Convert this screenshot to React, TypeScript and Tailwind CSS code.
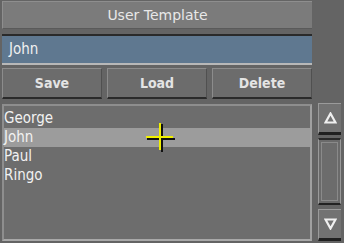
import React from "react";

export default function App() {
  const items = ["George", "John", "Paul", "Ringo"];
  const cond = { fontFamily: '"DejaVu Sans Condensed", "DejaVu Sans", sans-serif' };
  return (
    <div
      className="w-[344px] h-[243px] bg-[#646464] relative overflow-hidden flex flex-col pt-[1px] pl-[2px]"
      style={{ fontFamily: '"DejaVu Sans", sans-serif' }}
    >
      <div className="flex">
        <div className="w-[310px] flex flex-col">
          <div className="h-[28px] bg-[#7b7b7b] border-t border-l border-[#8e8e8e] border-b border-b-[#5a5a5a] flex items-center justify-center text-[14px] text-[#e8e8e8]">
            User Template
          </div>
          <div
            className="mt-[5px] h-[31px] bg-[#5f7890] border-t-2 border-t-[#2a2a2a] border-b-2 border-b-[#b8b8b8] flex items-center pl-[7px] text-[15px] text-[#f0f0f0]"
            style={cond}
          >
            John
          </div>
          <div className="mt-[3px] flex gap-[5px]" style={cond}>
            {["Save", "Load", "Delete"].map((b) => (
              <div
                key={b}
                className="flex-1 h-[31px] bg-[#6c6c6c] border-t border-l border-[#8c8c8c] border-r border-r-[#505050] border-b-2 border-b-[#2a2a2a] flex items-center justify-center text-[14px] font-bold text-[#e4e4e4]"
              >
                {b}
              </div>
            ))}
          </div>
          <div
            className="mt-[5px] h-[137px] bg-[#6d6d6d] border-2 border-[#8e8e8e] border-r-[#a0a0a0] border-b-[#a8a8a8] pt-[3px] flex flex-col"
            style={cond}
          >
            {items.map((it) => (
              <div
                key={it}
                className={`h-[19px] flex items-center pl-[0px] text-[15px] text-[#f2f2f2] ${
                  it === "John" ? "bg-[#9c9c9c]" : ""
                }`}
              >
                {it}
              </div>
            ))}
          </div>
        </div>
        <div className="ml-[6px] w-[23px] flex flex-col pt-[102px]">
          <div className="h-[32px] bg-[#727272] border-t border-l border-[#9a9a9a] border-b-[3px] border-b-[#202020] flex items-center justify-center">
            <svg width="13" height="12" viewBox="0 0 13 12">
              <path d="M6.5 1.5 L11.5 10.5 L1.5 10.5 Z" fill="none" stroke="#f0f0f0" strokeWidth="2.2" strokeLinejoin="miter" />
            </svg>
          </div>
          <div className="mt-[3px] h-[67px] bg-[#6a6a6a] border-t-2 border-t-[#2a2a2a] border-l border-l-[#9a9a9a] border-r border-r-[#9a9a9a] border-b-2 border-b-[#222] p-[2px]">
            <div className="w-full h-full border border-[#8a8a8a] bg-[#6c6c6c]" />
          </div>
          <div className="mt-[4px] h-[32px] bg-[#727272] border-t border-l border-[#9a9a9a] border-b-[3px] border-b-[#202020] flex items-center justify-center">
            <svg width="13" height="12" viewBox="0 0 13 12">
              <path d="M1.5 1.5 L11.5 1.5 L6.5 10.5 Z" fill="none" stroke="#f0f0f0" strokeWidth="2.2" strokeLinejoin="miter" />
            </svg>
          </div>
        </div>
      </div>
      <svg className="absolute left-[146px] top-[123px]" width="30" height="30" viewBox="0 0 30 30">
        <rect x="15" y="1" width="2" height="28" fill="#111" />
        <rect x="1" y="15" width="28" height="2" fill="#111" />
        <rect x="13" y="0" width="2" height="27" fill="#f0f000" />
        <rect x="0" y="13" width="27" height="2" fill="#f0f000" />
      </svg>
    </div>
  );
}
